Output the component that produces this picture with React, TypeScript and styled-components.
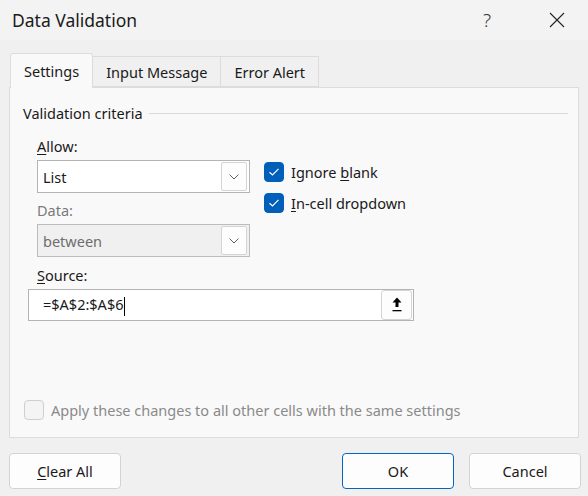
import React from 'react';
import styled, { createGlobalStyle } from 'styled-components';

const GlobalStyle = createGlobalStyle`
  html, body {
    margin: 0;
    padding: 0;
    background: #f0f0f0;
  }
  body {
    font-family: "Noto Sans", "Liberation Sans", sans-serif;
    font-size: 14.5px;
    color: #1a1a1a;
  }
`;

const Dialog = styled.div`
  width: 588px;
  height: 496px;
  display: flex;
  flex-direction: column;
  background: #f0f0f0;
  overflow: hidden;
`;

const TitleBar = styled.div`
  height: 40px;
  display: flex;
  align-items: center;
  padding-left: 12px;
  background: #f3f3f3;
`;

const TitleText = styled.div`
  flex: 1;
  font-size: 17.5px;
  color: #1b1b1b;
`;

const TitleButton = styled.div<{ $gap?: number }>`
  width: 46px;
  height: 40px;
  margin-right: ${(p) => p.$gap ?? 0}px;
  display: flex;
  align-items: center;
  justify-content: center;
  font-size: 19px;
  font-weight: 300;
  color: #333;
`;

const Body = styled.div`
  flex: 1;
  display: flex;
  flex-direction: column;
  padding: 13px 9px 0 9px;
`;

const TabRow = styled.div`
  display: flex;
  align-items: flex-end;
  height: 34px;
  padding-left: 1px;
  position: relative;
  z-index: 1;
`;

const Tab = styled.div<{ $active?: boolean }>`
  height: ${(p) => (p.$active ? '35px' : '31px')};
  margin-bottom: ${(p) => (p.$active ? '-1px' : '0')};
  padding: 0 13px;
  display: flex;
  align-items: center;
  box-sizing: border-box;
  background: ${(p) => (p.$active ? '#f9f9f9' : '#f0f0f0')};
  border: 1px solid #dcdcdc;
  border-bottom: ${(p) => (p.$active ? 'none' : '1px solid #dcdcdc')};
  border-left: ${(p) => (p.$active ? '1px solid #dcdcdc' : 'none')};
  border-radius: ${(p) => (p.$active ? '3px 3px 0 0' : '0')};
  color: #1a1a1a;
`;

const Panel = styled.div`
  height: 351px;
  box-sizing: border-box;
  border: 1px solid #dcdcdc;
  background: #f9f9f9;
  display: flex;
  flex-direction: column;
  padding: 15px 10px 17px 13px;
`;

const SectionHeader = styled.div`
  display: flex;
  align-items: center;
  height: 20px;
  gap: 6px;
`;

const SectionLine = styled.div`
  flex: 1;
  height: 1px;
  background: #d9d9d9;
`;

const Criteria = styled.div`
  display: flex;
  gap: 14px;
  padding-left: 14px;
  margin-top: 13px;
`;

const Column = styled.div`
  display: flex;
  flex-direction: column;
  width: 213px;
`;

const Label = styled.div<{ $disabled?: boolean; $top?: number }>`
  height: 20px;
  line-height: 20px;
  margin-top: ${(p) => p.$top ?? 0}px;
  margin-bottom: 4px;
  color: ${(p) => (p.$disabled ? '#7a7a7a' : '#1a1a1a')};
`;

const Combo = styled.div<{ $disabled?: boolean }>`
  height: 33px;
  box-sizing: border-box;
  border: 1px solid ${(p) => (p.$disabled ? '#bcbcbc' : '#b4b4b4')};
  background: ${(p) => (p.$disabled ? '#f0f0f0' : '#ffffff')};
  display: flex;
  align-items: center;
  padding: 0 2px 0 5px;
  color: ${(p) => (p.$disabled ? '#6d6d6d' : '#1a1a1a')};
`;

const ComboText = styled.div`
  flex: 1;
`;

const DropButton = styled.div`
  width: 26px;
  height: 29px;
  box-sizing: border-box;
  border: 1px solid #d4d4d4;
  border-radius: 2px;
  background: #fdfdfd;
  display: flex;
  align-items: center;
  justify-content: center;
`;

const Checks = styled.div`
  display: flex;
  flex-direction: column;
  gap: 11px;
  padding-top: 26px;
`;

const CheckRow = styled.div<{ $disabled?: boolean }>`
  display: flex;
  align-items: center;
  gap: 7px;
  height: 20px;
  color: ${(p) => (p.$disabled ? '#8a8a8a' : '#1a1a1a')};
`;

const Box = styled.div<{ $checked?: boolean }>`
  width: 20px;
  height: 20px;
  box-sizing: border-box;
  border-radius: 4px;
  background: ${(p) => (p.$checked ? '#005fb8' : '#f4f4f4')};
  border: 1px solid ${(p) => (p.$checked ? '#005fb8' : '#cfcfcf')};
  display: flex;
  align-items: center;
  justify-content: center;
`;

const SourceBlock = styled.div`
  display: flex;
  flex-direction: column;
  padding-left: 5px;
  width: 386px;
`;

const SourceLabel = styled(Label)`
  padding-left: 9px;
`;

const SourceInput = styled.div`
  height: 32px;
  box-sizing: border-box;
  border: 1px solid #b4b4b4;
  background: #ffffff;
  display: flex;
  align-items: center;
  padding: 0 1px 0 14px;
`;

const Caret = styled.span`
  display: inline-block;
  width: 1px;
  height: 19px;
  background: #000;
  margin-left: 1px;
  vertical-align: middle;
`;

const RefButton = styled.div`
  margin-left: auto;
  width: 31px;
  height: 30px;
  box-sizing: border-box;
  border: 1px solid #d4d4d4;
  border-radius: 3px;
  background: #fdfdfd;
  display: flex;
  align-items: center;
  justify-content: center;
`;

const ApplyRow = styled(CheckRow)`
  margin-top: auto;
  padding-left: 1px;
`;

const Footer = styled.div`
  display: flex;
  align-items: center;
  padding-top: 15px;
  margin-right: -2px;
  gap: 15px;
`;

const Button = styled.div<{ $primary?: boolean }>`
  width: 112px;
  height: 36px;
  box-sizing: border-box;
  border-radius: 4px;
  border: 1px solid ${(p) => (p.$primary ? '#0067c0' : '#d3d3d3')};
  background: #fdfdfd;
  display: flex;
  align-items: center;
  justify-content: center;
  color: #1a1a1a;
`;

const Spacer = styled.div`
  flex: 1;
`;

const U = styled.span`
  text-decoration: underline;
  text-underline-offset: 2px;
`;

const Chevron = () => (
  <svg width="10" height="6" viewBox="0 0 10 6">
    <path d="M0.5 0.5 L5 5 L9.5 0.5" fill="none" stroke="#5f5f5f" strokeWidth="1" />
  </svg>
);

const Check = () => (
  <svg width="12" height="10" viewBox="0 0 12 10">
    <path d="M1.5 5.2 L4.5 8 L10.5 1.8" fill="none" stroke="#ffffff" strokeWidth="1.2" />
  </svg>
);

const CloseIcon = () => (
  <svg width="16" height="16" viewBox="0 0 16 16">
    <path d="M1 1 L15 15 M15 1 L1 15" stroke="#222" strokeWidth="1.1" />
  </svg>
);

const CollapseIcon = () => (
  <svg width="10" height="16" viewBox="0 0 10 16">
    <path d="M5 0.5 L9.5 5.5 L6.5 5.5 L6.5 10 L3.5 10 L3.5 5.5 L0.5 5.5 Z" fill="#000" />
    <rect x="0.5" y="13" width="9" height="1.3" fill="#000" />
  </svg>
);

const App = () => {
  return (
    <Dialog>
      <GlobalStyle />
      <TitleBar>
        <TitleText>Data Validation</TitleText>
        <TitleButton $gap={24}>?</TitleButton>
        <TitleButton $gap={8}>
          <CloseIcon />
        </TitleButton>
      </TitleBar>
      <Body>
        <TabRow>
          <Tab $active>Settings</Tab>
          <Tab>Input Message</Tab>
          <Tab>Error Alert</Tab>
        </TabRow>
        <Panel>
          <SectionHeader>
            <span>Validation criteria</span>
            <SectionLine />
          </SectionHeader>
          <Criteria>
            <Column>
              <Label>
                <U>A</U>llow:
              </Label>
              <Combo>
                <ComboText>List</ComboText>
                <DropButton>
                  <Chevron />
                </DropButton>
              </Combo>
              <Label $disabled $top={7}>
                Data:
              </Label>
              <Combo $disabled>
                <ComboText>between</ComboText>
                <DropButton>
                  <Chevron />
                </DropButton>
              </Combo>
            </Column>
            <Checks>
              <CheckRow>
                <Box $checked>
                  <Check />
                </Box>
                <span>
                  Ignore <U>b</U>lank
                </span>
              </CheckRow>
              <CheckRow>
                <Box $checked>
                  <Check />
                </Box>
                <span>
                  <U>I</U>n-cell dropdown
                </span>
              </CheckRow>
            </Checks>
          </Criteria>
          <SourceBlock>
            <SourceLabel $top={8}>
              <U>S</U>ource:
            </SourceLabel>
            <SourceInput>
              <span>
                =$A$2:$A$6
                <Caret />
              </span>
              <RefButton>
                <CollapseIcon />
              </RefButton>
            </SourceInput>
          </SourceBlock>
          <ApplyRow $disabled>
            <Box />
            <span>Apply these changes to all other cells with the same settings</span>
          </ApplyRow>
        </Panel>
        <Footer>
          <Button>
            <span>
              <U>C</U>lear All
            </span>
          </Button>
          <Spacer />
          <Button $primary>OK</Button>
          <Button>Cancel</Button>
        </Footer>
      </Body>
    </Dialog>
  );
};

export default App;
